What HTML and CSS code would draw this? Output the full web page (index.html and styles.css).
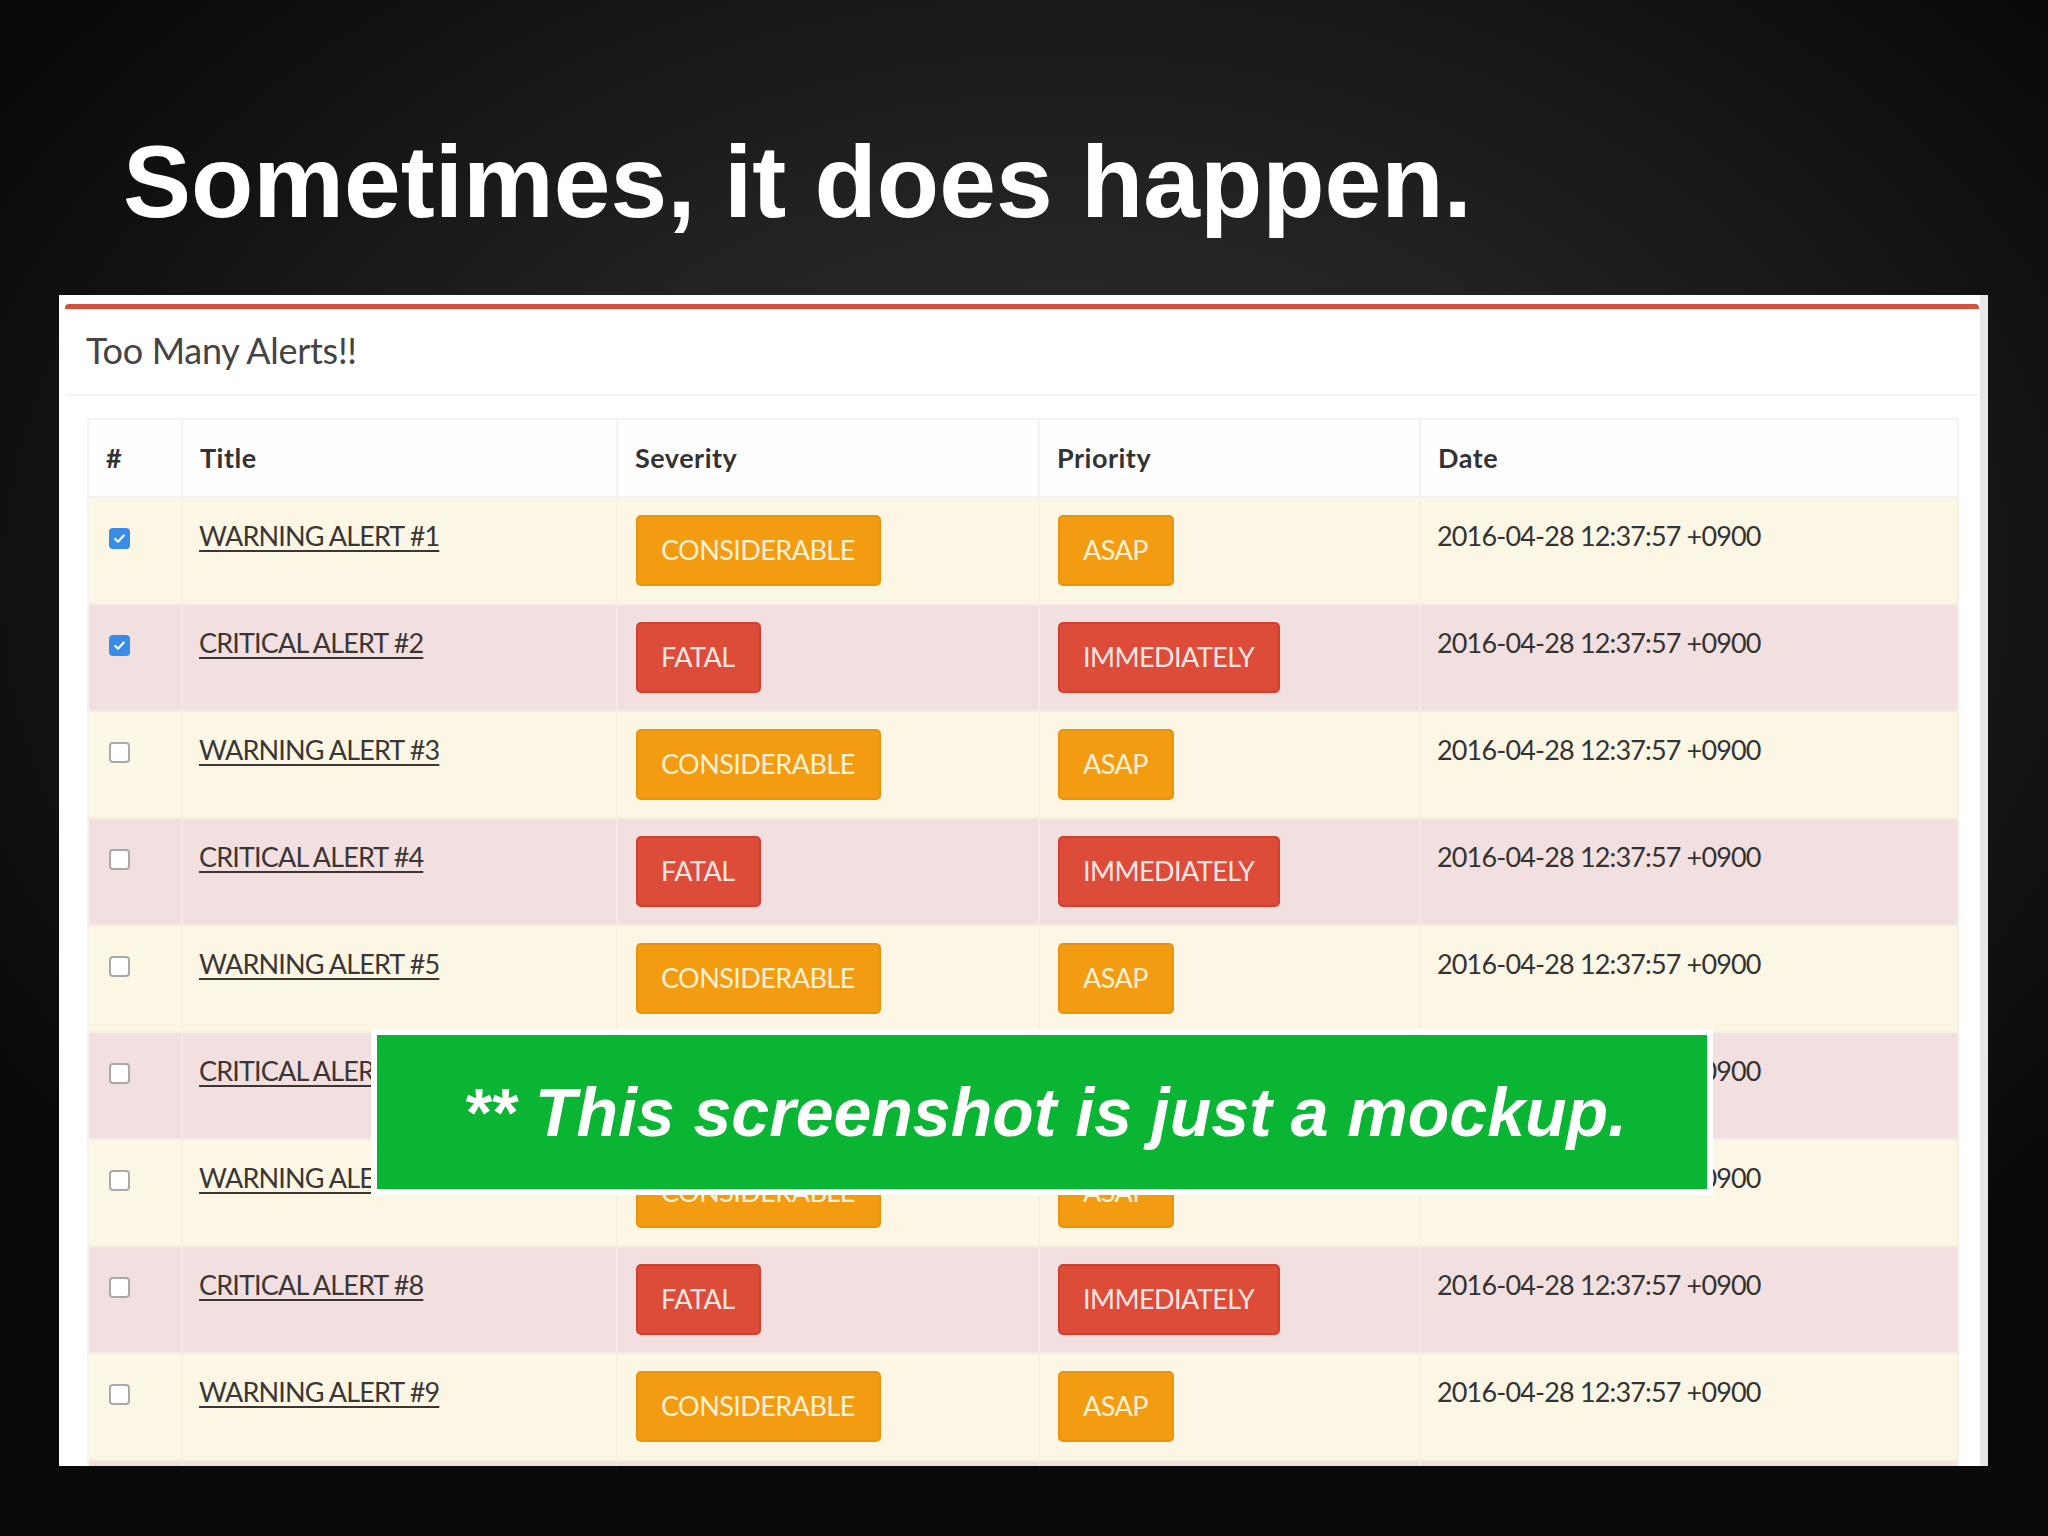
FILE: index.html
```html
<!DOCTYPE html>
<html>
<head>
<meta charset="utf-8">
<link rel="stylesheet" href="styles.css">
</head>
<body>
<div class="slide">
  <h1 class="slide-title">Sometimes, it does happen.</h1>
  <div class="panel">
    <div class="box">
      <div class="box-header"><h3 class="box-title">Too Many Alerts!!</h3></div>
      <div class="box-body">
        <table class="alerts">
          <colgroup>
            <col class="c-num"><col class="c-title"><col class="c-sev"><col class="c-pri"><col class="c-date">
          </colgroup>
          <thead>
            <tr><th>#</th><th>Title</th><th>Severity</th><th>Priority</th><th>Date</th></tr>
          </thead>
          <tbody>
            <tr class="warn">
              <td><span class="cb checked"><svg viewBox="0 0 20 20"><path d="M5 10.5l3.2 3.2L15 6.5"/></svg></span></td>
              <td class="text"><a class="alert-link">WARNING ALERT #1</a></td>
              <td><span class="btn btn-warning">CONSIDERABLE</span></td>
              <td><span class="btn btn-warning">ASAP</span></td>
              <td class="text date">2016-04-28 12:37:57 +0900</td>
            </tr>
            <tr class="danger">
              <td><span class="cb checked"><svg viewBox="0 0 20 20"><path d="M5 10.5l3.2 3.2L15 6.5"/></svg></span></td>
              <td class="text"><a class="alert-link">CRITICAL ALERT #2</a></td>
              <td><span class="btn btn-danger">FATAL</span></td>
              <td><span class="btn btn-danger">IMMEDIATELY</span></td>
              <td class="text date">2016-04-28 12:37:57 +0900</td>
            </tr>
            <tr class="warn">
              <td><span class="cb"></span></td>
              <td class="text"><a class="alert-link">WARNING ALERT #3</a></td>
              <td><span class="btn btn-warning">CONSIDERABLE</span></td>
              <td><span class="btn btn-warning">ASAP</span></td>
              <td class="text date">2016-04-28 12:37:57 +0900</td>
            </tr>
            <tr class="danger">
              <td><span class="cb"></span></td>
              <td class="text"><a class="alert-link">CRITICAL ALERT #4</a></td>
              <td><span class="btn btn-danger">FATAL</span></td>
              <td><span class="btn btn-danger">IMMEDIATELY</span></td>
              <td class="text date">2016-04-28 12:37:57 +0900</td>
            </tr>
            <tr class="warn">
              <td><span class="cb"></span></td>
              <td class="text"><a class="alert-link">WARNING ALERT #5</a></td>
              <td><span class="btn btn-warning">CONSIDERABLE</span></td>
              <td><span class="btn btn-warning">ASAP</span></td>
              <td class="text date">2016-04-28 12:37:57 +0900</td>
            </tr>
            <tr class="danger">
              <td><span class="cb"></span></td>
              <td class="text"><a class="alert-link">CRITICAL ALERT #6</a></td>
              <td><span class="btn btn-danger">FATAL</span></td>
              <td><span class="btn btn-danger">IMMEDIATELY</span></td>
              <td class="text date">2016-04-28 12:37:57 +0900</td>
            </tr>
            <tr class="warn">
              <td><span class="cb"></span></td>
              <td class="text"><a class="alert-link">WARNING ALERT #7</a></td>
              <td><span class="btn btn-warning">CONSIDERABLE</span></td>
              <td><span class="btn btn-warning">ASAP</span></td>
              <td class="text date">2016-04-28 12:37:57 +0900</td>
            </tr>
            <tr class="danger">
              <td><span class="cb"></span></td>
              <td class="text"><a class="alert-link">CRITICAL ALERT #8</a></td>
              <td><span class="btn btn-danger">FATAL</span></td>
              <td><span class="btn btn-danger">IMMEDIATELY</span></td>
              <td class="text date">2016-04-28 12:37:57 +0900</td>
            </tr>
            <tr class="warn">
              <td><span class="cb"></span></td>
              <td class="text"><a class="alert-link">WARNING ALERT #9</a></td>
              <td><span class="btn btn-warning">CONSIDERABLE</span></td>
              <td><span class="btn btn-warning">ASAP</span></td>
              <td class="text date">2016-04-28 12:37:57 +0900</td>
            </tr>
            <tr class="danger">
              <td><span class="cb"></span></td>
              <td class="text"><a class="alert-link">CRITICAL ALERT #10</a></td>
              <td><span class="btn btn-danger">FATAL</span></td>
              <td><span class="btn btn-danger">IMMEDIATELY</span></td>
              <td class="text date">2016-04-28 12:37:57 +0900</td>
            </tr>
          </tbody>
        </table>
      </div>
    </div>
    <div class="scrollbar"></div>
  </div>
  <div class="mockup-note">** This screenshot is just a mockup.</div>
</div>
</body>
</html>
```

FILE: styles.css
```css
html, body {
  margin: 0;
  padding: 0;
}
body {
  width: 2048px;
  height: 1536px;
  overflow: hidden;
  background: radial-gradient(ellipse 62% 58% at 52% 38%, #303030 0%, #222222 45%, #121212 80%, #0a0a0a 100%);
}
.slide {
  position: relative;
  width: 2048px;
  height: 1536px;
}
.slide-title {
  margin: 0;
  padding: 131px 0 0 123px;
  height: 295px;
  box-sizing: border-box;
  font-family: "Liberation Sans", Arial, sans-serif;
  font-weight: bold;
  font-size: 102px;
  line-height: 102px;
  color: #ffffff;
}
.panel {
  margin-left: 59px;
  width: 1929px;
  height: 1171px;
  background: #ffffff;
  overflow: hidden;
  display: flex;
  box-sizing: border-box;
}
.box {
  width: 1914px;
  margin: 9px 1px 0 6px;
  border-top: 5px solid #d2523f;
  border-radius: 4px 4px 0 0;
  background: #ffffff;
}
.scrollbar {
  width: 8px;
  background: #e7e7ea;
}
.box-header {
  height: 85px;
  border-bottom: 2px solid #f3f3f3;
  display: flex;
  align-items: center;
  padding-left: 21px;
}
.box-title {
  margin: 0;
  font-family: Lato, "Noto Sans", sans-serif;
  font-weight: normal;
  font-size: 36px;
  letter-spacing: -0.3px;
  color: #444444;
  padding-bottom: 3px;
}
.box-body {
  padding: 22px 22px 0 22px;
}
.alerts {
  width: 1870px;
  table-layout: fixed;
  border-collapse: collapse;
  font-family: Lato, "Noto Sans", sans-serif;
  font-size: 27px;
  color: #333333;
}
.c-num { width: 94px; }
.c-title { width: 435px; }
.c-sev { width: 422px; }
.c-pri { width: 381px; }
.c-date { width: 538px; }
.alerts th, .alerts td {
  border: 2px solid #f2f2f2;
  padding: 17px 17px 17px 18px;
  line-height: 42px;
  text-align: left;
  vertical-align: top;
  white-space: nowrap;
}
.alerts th {
  font-weight: bold;
  background: #fefefe;
  color: #333333;
  letter-spacing: 0.5px;
  padding-left: 17px;
}
.alerts td.text {
  padding-left: 16px;
}
.alerts td.date {
  letter-spacing: -0.85px;
}
.alerts tr.warn td {
  background: #fcf6e5;
  border-color: #f7f1e2;
}
.alerts tr.danger td {
  background: #f2dfdf;
  border-color: #f5eaea;
}
.alerts tr td:first-child { border-left-color: #f4f4f4; }
.alert-link {
  color: #3b3634;
  text-decoration: underline;
  text-decoration-thickness: 2px;
  text-underline-offset: 4px;
  letter-spacing: -0.85px;
}
.cb {
  display: block;
  width: 21px;
  height: 21px;
  margin-top: 13px;
  margin-left: 2px;
  box-sizing: border-box;
  border: 2px solid #a9a9a9;
  border-radius: 4px;
  background: #ffffff;
}
.cb.checked {
  border-color: #3a8de6;
  background: #3a8de6;
}
.cb svg {
  display: block;
  width: 17px;
  height: 17px;
  fill: none;
  stroke: #ffffff;
  stroke-width: 2.6;
  stroke-linecap: round;
  stroke-linejoin: round;
}
.btn {
  display: inline-block;
  padding: 12px 24px 13px 23px;
  border: 2px solid;
  border-radius: 5px;
  line-height: 42px;
  font-size: 27px;
  letter-spacing: -0.55px;
  vertical-align: top;
}
.btn-warning {
  background: #f39c12;
  border-color: #e6940f;
  color: #fdf1d6;
}
.btn-danger {
  background: #dd4b39;
  border-color: #d2402f;
  color: #fbe7e4;
}
.mockup-note {
  position: absolute;
  left: 371px;
  top: 1029px;
  width: 1342px;
  height: 166px;
  box-sizing: border-box;
  border: 6px solid #ffffff;
  background: #0bb534;
  color: #ffffff;
  font-family: "Liberation Sans", Arial, sans-serif;
  font-weight: bold;
  font-style: italic;
  font-size: 68px;
  display: flex;
  align-items: center;
  justify-content: center;
  padding-left: 6px;
}
```
